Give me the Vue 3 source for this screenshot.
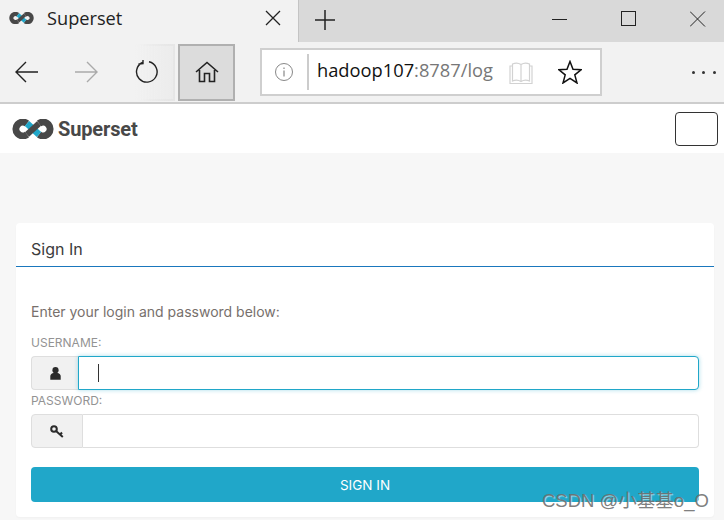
<script setup>
</script>

<template>
  <div class="window">
    <div class="tabbar">
      <div class="tab">
        <svg class="favicon" width="25" height="12" viewBox="0 0 42 20">
          <path d="M15 4.500 A6.900 6.900 0 1 0 15 15.500 M27 4.500 A6.900 6.900 0 1 1 27 15.500" fill="none" stroke="#484848" stroke-width="7" />
          <path d="M27 15.500 L15 4.500" fill="none" stroke="#20a7c9" stroke-width="6.500" />
          <path d="M15 15.500 L27 4.500" fill="none" stroke="#484848" stroke-width="6" />
        </svg>
        <span class="tab-title">Superset</span>
        <svg class="tab-close" width="16" height="16" viewBox="0 0 16 16"><path d="M1 1 L15 15 M15 1 L1 15" stroke="#222" stroke-width="1.300" /></svg>
      </div>
      <div class="newtab">
        <svg width="22" height="22" viewBox="0 0 22 22"><path d="M11 1 V21 M1 11 H21" stroke="#222" stroke-width="1.500" /></svg>
      </div>
      <div class="wincontrols">
        <div class="winbtn"><svg width="16" height="16" viewBox="0 0 16 16"><path d="M0 8.500 H15" stroke="#222" stroke-width="1" /></svg></div>
        <div class="winbtn"><svg width="16" height="16" viewBox="0 0 16 16"><rect x="0.500" y="0.500" width="14" height="14" fill="none" stroke="#222" stroke-width="1" /></svg></div>
        <div class="winbtn"><svg width="16" height="16" viewBox="0 0 16 16"><path d="M0 0.500 L15 15.500 M15 0.500 L0 15.500" stroke="#222" stroke-width="1" /></svg></div>
      </div>
    </div>

    <div class="toolbar">
      <div class="navbtn">
        <svg width="24" height="22" viewBox="0 0 24 22"><path d="M23 11 H1 M11 1 L1 11 L11 21" fill="none" stroke="#222" stroke-width="1.400" /></svg>
      </div>
      <div class="navbtn forward">
        <svg width="24" height="22" viewBox="0 0 24 22"><path d="M1 11 H23 M13 1 L23 11 L13 21" fill="none" stroke="#aaa" stroke-width="1.400" /></svg>
      </div>
      <div class="reload">
        <svg width="24" height="24" viewBox="0 0 24 24"><path d="M7.500 2.500 A10.300 10.300 0 1 0 14 1.800 M8 -1 L8 3.500 L3.500 4" fill="none" stroke="#222" stroke-width="1.400" /></svg>
      </div>
      <div class="homebtn">
        <svg width="24" height="22" viewBox="0 0 24 22"><path d="M1 11 L12 1.500 L23 11 M4.500 9 V20.500 H9.500 V12.500 H14.500 V20.500 H19.500 V9" fill="none" stroke="#222" stroke-width="1.600" /></svg>
      </div>
      <div class="addressbar">
        <svg class="info" width="20" height="20" viewBox="0 0 20 20"><circle cx="10" cy="10" r="8.500" fill="none" stroke="#888" stroke-width="1" /><path d="M10 8.500 V14.500 M10 5.500 V7" stroke="#888" stroke-width="1.200" /></svg>
        <div class="addr-sep"></div>
        <div class="url"><span class="host">hadoop107</span><span class="path">:8787/log</span></div>
        <svg class="book" width="24" height="24" viewBox="0 0 24 24"><path d="M3.500 3 C6 1.800 9.500 1.800 12 3.500 C14.500 1.800 18 1.800 20.500 3 V20 C18 18.800 14.500 18.800 12 20.500 C9.500 18.800 6 18.800 3.500 20 Z M12 3.500 V20.500 M3.500 5 H1 V22.500 H23 V5 H20.500" fill="none" stroke="#d2d2d2" stroke-width="1.200" /></svg>
        <svg class="star" width="24" height="24" viewBox="0 0 24 24"><path d="M12 1.500 L15 9.300 L23.300 9.700 L16.800 14.900 L19 23 L12 18.400 L5 23 L7.200 14.900 L0.700 9.700 L9 9.300 Z" fill="none" stroke="#111" stroke-width="1.500" /></svg>
      </div>
      <div class="more"><i></i><i></i><i></i></div>
    </div>

    <header class="appheader">
      <div class="brand">
        <svg width="42" height="20" viewBox="0 0 42 20">
          <path d="M15 4.500 A6.900 6.900 0 1 0 15 15.500 M27 4.500 A6.900 6.900 0 1 1 27 15.500" fill="none" stroke="#484848" stroke-width="7" />
          <path d="M27 15.500 L15 4.500" fill="none" stroke="#20a7c9" stroke-width="6.500" />
          <path d="M15 15.500 L27 4.500" fill="none" stroke="#484848" stroke-width="6" />
        </svg>
        <span class="brand-name">Superset</span>
      </div>
      <button class="toggler" type="button"></button>
    </header>

    <main class="content">
      <section class="card">
        <div class="card-head">
          <h2 class="card-title">Sign In</h2>
        </div>
        <div class="card-body">
          <p class="hint">Enter your login and password below:</p>
          <label class="label">USERNAME:</label>
          <div class="group">
            <span class="addon user-addon">
              <svg width="11" height="13" viewBox="0 0 11 13"><circle cx="5.500" cy="3.200" r="3.100" fill="#2b2b2b" /><path d="M0.300 12.800 V9 C0.300 7.500 2 6 3.500 6 H7.500 C9 6 10.700 7.500 10.700 9 V12.800 Z" fill="#2b2b2b" /></svg>
            </span>
            <div class="input focused"><span class="caret"></span></div>
          </div>
          <label class="label">PASSWORD:</label>
          <div class="group">
            <span class="addon key-addon">
              <svg width="14" height="13" viewBox="0 0 14 13"><circle cx="4" cy="4" r="2.800" fill="none" stroke="#2b2b2b" stroke-width="2" /><path d="M6 6 L12.800 12 M9.800 10 L12 7.500" fill="none" stroke="#2b2b2b" stroke-width="2" /></svg>
            </span>
            <div class="input"></div>
          </div>
          <button class="submit" type="button">SIGN IN</button>
        </div>
      </section>
    </main>

    <div class="watermark">CSDN @小基基o_O</div>
  </div>
</template>

<style>
html, body { margin: 0; padding: 0; overflow: hidden; }
</style>

<style scoped>
* { box-sizing: border-box; }
.window {
  position: relative;
  width: 724px;
  height: 520px;
  overflow: hidden;
  background: #f7f7f7;
  display: flex;
  flex-direction: column;
  font-family: "Inter", "Liberation Sans", sans-serif;
}
.tabbar {
  height: 42px;
  flex: none;
  display: flex;
  align-items: center;
  background: #d9d9d9;
}
.tab {
  width: 299px;
  height: 42px;
  background: #f2f2f2;
  border-right: 1px solid #c4c4c4;
  display: flex;
  align-items: center;
  padding: 0 17px 6px 9px;
}
.tab-title {
  margin-left: 13px;
  font-family: "Open Sans", "Noto Sans", sans-serif;
  font-size: 18.200px;
  line-height: 24px;
  color: #222;
  flex: 1;
}
.favicon { flex: none; }
.tab-close { flex: none; }
.newtab {
  margin-left: 15px;
  display: flex;
  margin-top: -2px;
}
.wincontrols {
  margin-left: auto;
  display: flex;
  padding-right: 18px;
  gap: 53px;
  margin-top: -5px;
}
.winbtn { display: flex; width: 16px; height: 16px; }
.toolbar {
  height: 62px;
  flex: none;
  background: #f2f2f2;
  border-bottom: 2px solid #cdcdcd;
  display: flex;
  align-items: center;
  padding-left: 15px;
}
.navbtn { width: 60px; display: flex; }
.navbtn.forward { width: 51px; margin-left: -1px; }
.reload {
  width: 50px;
  height: 57px;
  margin-right: 3px;
  padding-left: 10px;
  display: flex;
  align-items: center;
  border-style: solid;
  border-width: 2px 2px 2px 0;
  border-image: linear-gradient(to right, rgba(228, 228, 228, 0) 30%, #e6e6e6) 1;
  background: linear-gradient(to right, rgba(236, 236, 236, 0) 20%, #ececec);
}
.homebtn {
  width: 57px;
  height: 57px;
  background: #dcdcdc;
  border: 2px solid #b0b0b0;
  display: flex;
  align-items: center;
  justify-content: center;
}
.addressbar {
  margin-left: 25px;
  width: 342px;
  height: 48px;
  background: #fff;
  border: 2px solid #cfcfcf;
  display: flex;
  align-items: center;
}
.info { margin-left: 12px; flex: none; }
.addr-sep { width: 2px; height: 36px; background: #ccc; margin-left: 13px; flex: none; }
.url {
  margin-left: 8px;
  font-family: "Open Sans", "Noto Sans", sans-serif;
  font-size: 18.300px;
  margin-top: -6px;
  white-space: nowrap;
  width: 180px;
  flex: none;
}
.host { color: #111; }
.path { color: #777; }
.book { margin-left: 12px; flex: none; margin-top: 1px; }
.star { margin-left: 25px; flex: none; }
.more {
  margin-left: auto;
  margin-right: 8.500px;
  display: flex;
  gap: 7.500px;
}
.more i { width: 3px; height: 3px; background: #333; display: block; border-radius: 50%; }
.appheader {
  height: 49px;
  flex: none;
  background: #fff;
  display: flex;
  align-items: center;
  justify-content: space-between;
  padding: 0 6px 0 12px;
}
.brand { display: flex; align-items: center; gap: 4px; }
.brand-name {
  font-family: "Roboto", "Liberation Sans", sans-serif;
  font-weight: 700;
  font-size: 20px;
  color: #484848;
  letter-spacing: -0.150px;
}
.toggler {
  width: 43px;
  height: 34px;
  background: #fff;
  border: 1px solid #333;
  border-radius: 4px;
  padding: 0;
  margin-top: 1px;
}
.content {
  flex: 1;
  padding: 70px 10px 0 16px;
}
.card {
  background: #fff;
  border-radius: 4px;
  height: 294px;
  box-shadow: 0 1px 2px rgba(0, 0, 0, 0.03);
}
.card-head {
  height: 44px;
  padding: 16px 15px 0;
  border-bottom: 1px solid #1a77bd;
}
.card-title {
  margin: 0;
  font-size: 16px;
  line-height: 20px;
  font-weight: 400;
  color: #3c3c3c;
}
.card-body { padding: 36px 15px 0; }
.hint {
  margin: 0 0 15px;
  font-size: 14px;
  line-height: 18px;
  color: #77706c;
}
.label {
  display: block;
  font-size: 12px;
  line-height: 14px;
  color: #939393;
}
.group {
  display: flex;
  height: 34px;
  margin-top: 6px;
  margin-bottom: 4px;
}
.addon {
  flex: none;
  background: #f1f1f1;
  border: 1px solid #dedede;
  border-right: none;
  border-radius: 4px 0 0 4px;
  display: flex;
  align-items: center;
  justify-content: center;
}
.user-addon { width: 47px; }
.key-addon { width: 52px; border-right: 1px solid #dedede; }
.input {
  flex: 1;
  background: #fff;
  border: 1px solid #dedede;
  border-left: none;
  border-radius: 0 4px 4px 0;
  display: flex;
  align-items: center;
}
.input.focused {
  border: 1px solid #20a7c9;
  box-shadow: 0 0 4px rgba(32, 167, 201, 0.4);
}
.caret {
  width: 1px;
  height: 18px;
  background: #333;
  margin-left: 19px;
}
.submit {
  display: block;
  width: 100%;
  height: 35px;
  margin-top: 19px;
  background: #20a7c9;
  color: #fff;
  border: none;
  border-radius: 4px;
  font-family: inherit;
  font-size: 13.500px;
  padding: 0;
}
.watermark {
  position: absolute;
  left: 542px;
  top: 490px;
  font-family: "Liberation Sans", "Noto Sans CJK SC", sans-serif;
  font-size: 18.500px;
  line-height: 22px;
  color: rgba(110, 110, 110, 0.9);
  text-shadow: 1px 1px 1px rgba(255, 255, 255, 0.6);
  white-space: nowrap;
}
</style>
